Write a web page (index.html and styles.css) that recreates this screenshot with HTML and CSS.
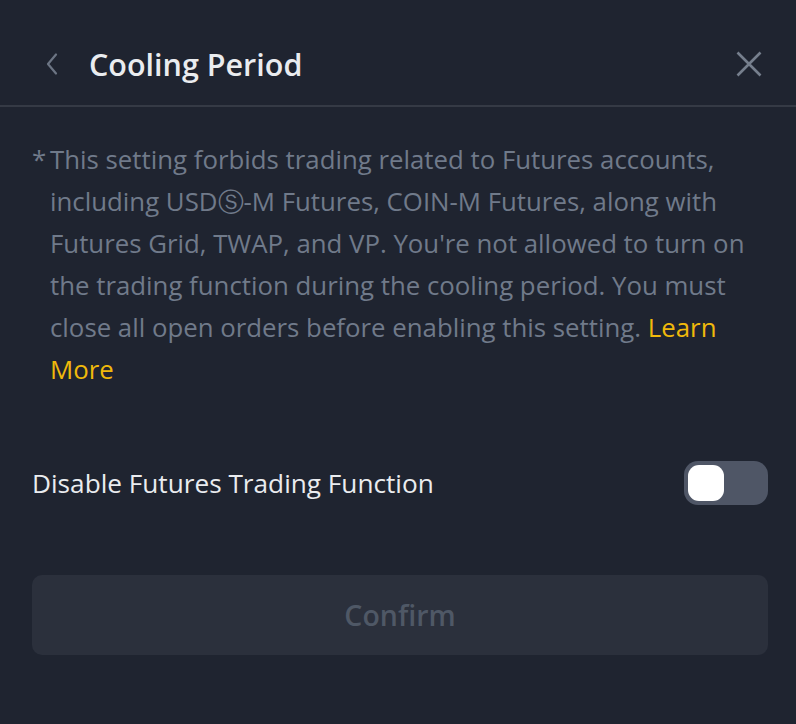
FILE: index.html
```html
<!DOCTYPE html>
<html lang="en">
<head>
<meta charset="utf-8">
<title>Cooling Period</title>
<link rel="stylesheet" href="styles.css">
</head>
<body>
<div class="panel">
  <header class="header">
    <div class="header-left">
      <svg class="back" width="24" height="24" viewBox="0 0 24 24" fill="none">
        <path d="M16 2.5 L8 12 L16 21.5" stroke="#6c7584" stroke-width="2.2" stroke-linecap="round" stroke-linejoin="round"/>
      </svg>
      <h1 class="title">Cooling Period</h1>
    </div>
    <svg class="close" width="26" height="26" viewBox="0 0 26 26" fill="none">
      <path d="M1.5 1.5 L24.5 24.5 M24.5 1.5 L1.5 24.5" stroke="#767f8d" stroke-width="2.6"/>
    </svg>
  </header>
  <main class="content">
    <div class="note">
      <span class="star">*</span>
      <p class="note-text">This setting forbids trading related to Futures accounts, including USDⓈ-M Futures, COIN-M Futures, along with Futures Grid, TWAP, and VP. You're not allowed to turn on the trading function during the cooling period. You must close all open orders before enabling this setting. <a class="link" href="#">Learn More</a></p>
    </div>
    <div class="row">
      <span class="label">Disable Futures Trading Function</span>
      <span class="toggle"><span class="knob"></span></span>
    </div>
    <button class="confirm" type="button">Confirm</button>
  </main>
</div>
</body>
</html>
```

FILE: styles.css
```css
* { box-sizing: border-box; }
html, body {
  margin: 0;
  padding: 0;
  background: #1f2430;
}
body {
  font-family: "Open Sans", Lato, sans-serif;
  width: 796px;
  height: 724px;
  overflow: hidden;
}
.panel {
  display: flex;
  flex-direction: column;
}
.header {
  height: 107px;
  border-bottom: 2px solid #353a45;
  display: flex;
  align-items: center;
  justify-content: space-between;
  padding: 22px 34px 0 40px;
}
.header-left {
  display: flex;
  align-items: center;
  gap: 25px;
}
.back { display: block; }
.close { display: block; }
.title {
  margin: 0;
  font-size: 30.5px;
  font-weight: 600;
  color: #eaecef;
}
.content {
  padding: 31px 28px 0 32px;
  display: flex;
  flex-direction: column;
}
.note {
  display: flex;
  gap: 8px;
  color: #707a8a;
  font-size: 25.8px;
  line-height: 42px;
}
.star { flex: none; width: 10px; }
.note-text { margin: 0; }
.link { color: #f0b90b; text-decoration: none; }
.row {
  margin-top: 71px;
  display: flex;
  align-items: center;
  justify-content: space-between;
}
.label {
  font-size: 26.2px;
  color: #eaecef;
}
.toggle {
  width: 84px;
  height: 44px;
  border-radius: 14px;
  background: #4f5666;
  padding: 4px;
  display: flex;
}
.knob {
  width: 36px;
  height: 36px;
  border-radius: 11px;
  background: #ffffff;
}
.confirm {
  margin-top: 70px;
  height: 80px;
  border: 0;
  border-radius: 10px;
  background: #2b303c;
  color: #4f5866;
  font-family: inherit;
  font-size: 28.5px;
  font-weight: 600;
}
```
